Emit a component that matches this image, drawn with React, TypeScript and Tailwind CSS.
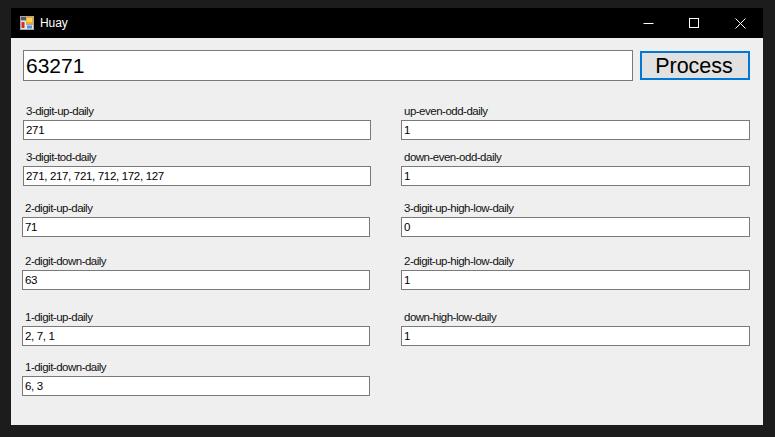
const leftFields = [
  { label: '3-digit-up-daily', value: '271', className: 'mt-[22px]' },
  { label: '3-digit-tod-daily', value: '271, 217, 721, 712, 172, 127', className: 'mt-[9px]' },
  { label: '2-digit-up-daily', value: '71', className: 'mt-[14px] -ml-px' },
  { label: '2-digit-down-daily', value: '63', className: 'mt-[16px] -ml-px' },
  { label: '1-digit-up-daily', value: '2, 7, 1', className: 'mt-[19px] -ml-px' },
  { label: '1-digit-down-daily', value: '6, 3', className: 'mt-[13px] -ml-px' },
]

const rightFields = [
  { label: 'up-even-odd-daily', value: '1', className: 'mt-[22px] w-[349px]' },
  { label: 'down-even-odd-daily', value: '1', className: 'mt-[9px] w-[349px]' },
  { label: '3-digit-up-high-low-daily', value: '0', className: 'mt-[14px] w-[349px]' },
  { label: '2-digit-up-high-low-daily', value: '1', className: 'mt-[16px] w-[349px]' },
  { label: 'down-high-low-daily', value: '1', className: 'mt-[19px] w-[349px]' },
]

function Field({ label, value, className }: { label: string; value: string; className: string }) {
  return (
    <div className={className}>
      <div className="h-[17px] pl-[3px] text-[11.5px] leading-[17px] tracking-[-0.5px] text-[#111]">{label}</div>
      <input
        readOnly
        value={value}
        className="block h-5 w-full border border-[#7a7a7a] bg-white px-[2px] text-[11.5px] tracking-[-0.33px] text-black outline-none"
      />
    </div>
  )
}

function AppIcon() {
  return (
    <svg width="14" height="14" viewBox="0 0 14 14">
      <rect x="0" y="0" width="14" height="14" fill="#a8a8a8" />
      <rect x="1" y="1" width="5" height="3" fill="#5a5a5a" />
      <rect x="1" y="5" width="5" height="8" fill="#e8e8e8" />
      <rect x="1.5" y="6" width="3" height="6" fill="#c8322a" />
      <rect x="6" y="1" width="7" height="7" fill="#f2a91a" />
      <rect x="7" y="2" width="5" height="4" fill="#fbd95e" />
      <rect x="6" y="9" width="7" height="4" fill="#e8e8e8" />
      <rect x="7" y="9.5" width="5" height="3" fill="#5b8fdc" />
    </svg>
  )
}

export default function App() {
  return (
    <div className="h-[437px] w-[775px] overflow-hidden bg-[#1c1c1c] pl-[11px] pt-2 font-['Liberation_Sans',Arial,sans-serif]">
      <div className="flex h-[417px] w-[752px] flex-col">
        {/* Title bar */}
        <div className="flex h-[30px] shrink-0 items-center bg-black pl-[9px] text-white">
          <AppIcon />
          <span className="ml-[6px] text-[12px] tracking-[-0.1px]">Huay</span>
          <div className="ml-auto flex h-full items-center">
            <div className="flex w-[46px] justify-center">
              <svg width="11" height="11" viewBox="0 0 11 11">
                <path d="M0.5 5.5H10.5" stroke="#fff" strokeWidth="1" />
              </svg>
            </div>
            <div className="flex w-[46px] justify-center">
              <svg width="11" height="11" viewBox="0 0 11 11">
                <rect x="0.5" y="0.5" width="9" height="9" fill="none" stroke="#fff" strokeWidth="1" />
              </svg>
            </div>
            <div className="flex w-[46px] justify-center">
              <svg width="11" height="11" viewBox="0 0 11 11">
                <path d="M0.5 0.5L10.5 10.5M10.5 0.5L0.5 10.5" stroke="#fff" strokeWidth="1" />
              </svg>
            </div>
          </div>
        </div>

        {/* Client area */}
        <div className="flex-1 bg-[#efefef] pl-3 pt-3">
          <div className="flex h-[31px] items-center">
            <input
              readOnly
              value="63271"
              className="block h-[31px] w-[610px] border border-[#7a7a7a] bg-white px-[2px] text-[21px] text-black outline-none"
            />
            <button className="ml-[7px] h-[29px] w-[110px] border-2 border-[#0078d7] bg-[#e1e1e1] pr-[2px] pt-[3px] text-[21.5px] leading-none text-black">
              Process
            </button>
          </div>

          <div className="flex">
            <div className="w-[378px]">
              {leftFields.map((f) => (
                <Field key={f.label} {...f} className={`${f.className} w-[348px]`} />
              ))}
            </div>
            <div>
              {rightFields.map((f) => (
                <Field key={f.label} {...f} />
              ))}
            </div>
          </div>
        </div>
      </div>
    </div>
  )
}
